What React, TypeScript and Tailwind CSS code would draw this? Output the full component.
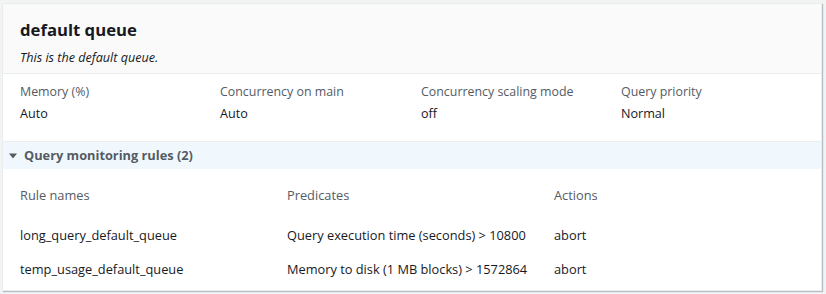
const kv = [
  { label: 'Memory (%)', value: 'Auto' },
  { label: 'Concurrency on main', value: 'Auto' },
  { label: 'Concurrency scaling mode', value: 'off' },
  { label: 'Query priority', value: 'Normal' },
];

const rules = [
  { name: 'long_query_default_queue', predicate: 'Query execution time (seconds) > 10800', action: 'abort' },
  { name: 'temp_usage_default_queue', predicate: 'Memory to disk (1 MB blocks) > 1572864', action: 'abort' },
];

export default function App() {
  return (
    <div
      className="h-[294px] w-[826px] bg-[#f2f3f3] pl-[2px] pt-[3px]"
      style={{ fontFamily: '"Open Sans", "Liberation Sans", sans-serif' }}
    >
      <div className="w-[820px] h-[288px] overflow-hidden border border-[#eaeded] bg-white shadow-[1px_1px_1px_rgba(0,31,63,0.25)]">
        <div className="h-[70px] bg-[#fafafa] border-b border-[#eaeded] px-[17px] pt-[15px]">
          <h2 className="text-[16.7px] leading-[22px] font-bold text-[#16191f]">default queue</h2>
          <p className="mt-[9px] text-[12.6px] leading-[16px] italic text-[#16191f]">This is the default queue.</p>
        </div>

        <div className="h-[68px] grid grid-cols-[200px_201px_200px_1fr] px-[17px] pt-[9px] border-b border-[#eaeded]">
          {kv.map((k) => (
            <div key={k.label}>
              <div className="text-[12.4px] leading-[18px] text-[#545b64]">{k.label}</div>
              <div className="mt-[4px] text-[12.6px] leading-[18px] text-[#16191f]">{k.value}</div>
            </div>
          ))}
        </div>

        <div className="h-[27px] bg-[#f1f8fd] flex items-center pl-[4px] gap-[5px]">
          <svg width="12" height="12" viewBox="0 0 12 12">
            <path d="M2 3.5 L10 3.5 L6 8.5 Z" fill="#545b64" />
          </svg>
          <span className="text-[12.8px] font-bold text-[#545b64]">Query monitoring rules (2)</span>
        </div>

        <div className="px-[17px] pt-[17px]">
          <div className="grid grid-cols-[267px_267px_1fr] h-[20px] items-center text-[12.8px] text-[#545b64]">
            <div>Rule names</div>
            <div>Predicates</div>
            <div>Actions</div>
          </div>
          <div className="mt-[20px] flex flex-col gap-[14px]">
            {rules.map((r) => (
              <div key={r.name} className="grid grid-cols-[267px_267px_1fr] h-[20px] items-center text-[12.8px] text-[#16191f]">
                <div>{r.name}</div>
                <div>{r.predicate}</div>
                <div>{r.action}</div>
              </div>
            ))}
          </div>
        </div>
      </div>
    </div>
  );
}
